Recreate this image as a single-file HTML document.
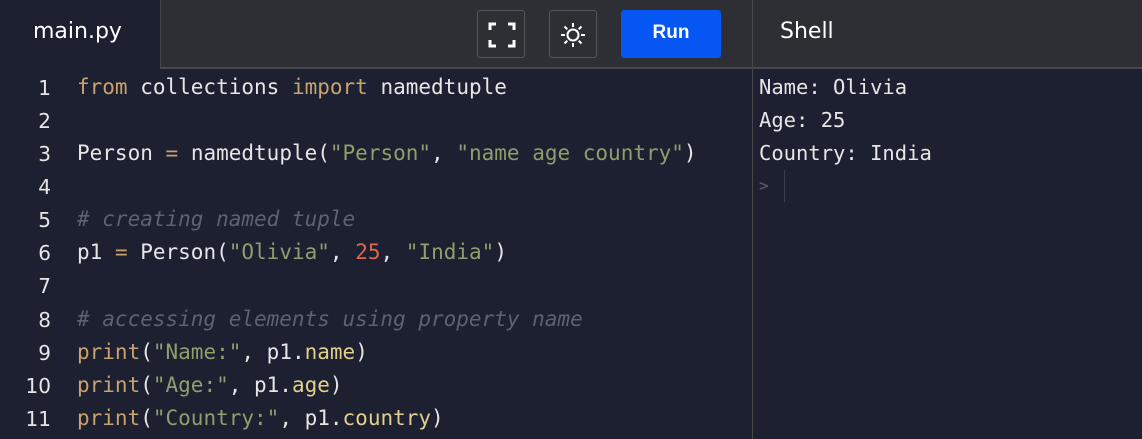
<!DOCTYPE html>
<html><head><style>
*{margin:0;padding:0;box-sizing:border-box}
body{width:1142px;height:439px;background:#1c2030;overflow:hidden;position:relative;font-family:"DejaVu Sans Mono","Liberation Mono",monospace;}
.hdr{position:absolute;left:160px;top:0;width:982px;height:69px;background:#2e2f35;border-left:1px solid #45464c;border-bottom:2px solid #45474d}
.tab{position:absolute;left:33px;top:19px;color:#fff;font:22px "DejaVu Sans",sans-serif}
.btn{position:absolute;top:10px;width:48px;height:48px;border:1px solid #55565c;border-radius:3px}
.run{position:absolute;left:621px;top:10px;width:100px;height:48px;background:#0556f3;border-radius:3px;color:#fff;font:bold 19px "Liberation Sans",sans-serif;text-align:center;line-height:46px}
.div{position:absolute;left:752px;top:0;width:1px;height:439px;background:#45474d}
.shell{position:absolute;left:780px;top:19px;color:#fff;font:22px "DejaVu Sans",sans-serif}
.ln{position:absolute;left:0;width:51px;text-align:right;color:#e6e6e6;font:20px "DejaVu Sans",sans-serif;margin-top:2px}
.code{position:absolute;left:77px;color:#e6e6e6;font-size:21px;white-space:pre;margin-top:2px}
.k{color:#c9a26d}.s{color:#8f9e6c}.a{color:#e2cf8b}.n{color:#e0654f}.c{color:#5d6170;font-style:italic}
.out{position:absolute;left:759px;color:#e6e6e6;font-size:20.5px;white-space:pre;margin-top:1px}
</style></head><body>
<div class="hdr"></div>
<div class="tab">main.py</div>
<div class="btn" style="left:477px"><svg width="48" height="48" viewBox="0 0 48 48" fill="none" stroke="#fff" stroke-width="3"><path d="M12 19v-6h6M30 13h6v6M36 29v6h-6M18 35h-6v-6"/></svg></div>
<div class="btn" style="left:549px"><svg width="48" height="48" viewBox="0 0 48 48" fill="none" stroke="#fff" stroke-width="2"><circle cx="23" cy="24" r="5.5"/><path d="M23 12v4M23 32v4M11 24h4M31 24h4M14.5 15.5l2.8 2.8M28.7 29.7l2.8 2.8M14.5 32.5l2.8-2.8M28.7 18.3l2.8-2.8"/></svg></div>
<div class="run">Run</div>
<div class="div"></div>
<div class="shell">Shell</div>
<div class="ln" style="top:74px">1</div><div class="code" style="top:73px"><span class="k">from</span> collections <span class="k">import</span> namedtuple</div>
<div class="ln" style="top:107px">2</div>
<div class="ln" style="top:140px">3</div><div class="code" style="top:139px">Person <span class="k">=</span> namedtuple(<span class="s">"Person"</span>, <span class="s">"name age country"</span>)</div>
<div class="ln" style="top:173px">4</div>
<div class="ln" style="top:206px">5</div><div class="code" style="top:205px"><span class="c"># creating named tuple</span></div>
<div class="ln" style="top:239px">6</div><div class="code" style="top:238px">p1 <span class="k">=</span> Person(<span class="s">"Olivia"</span>, <span class="n">25</span>, <span class="s">"India"</span>)</div>
<div class="ln" style="top:272px">7</div>
<div class="ln" style="top:306px">8</div><div class="code" style="top:305px"><span class="c"># accessing elements using property name</span></div>
<div class="ln" style="top:339px">9</div><div class="code" style="top:338px"><span class="k">print</span>(<span class="s">"Name:"</span>, p1.<span class="a">name</span>)</div>
<div class="ln" style="top:372px">10</div><div class="code" style="top:371px"><span class="k">print</span>(<span class="s">"Age:"</span>, p1.<span class="a">age</span>)</div>
<div class="ln" style="top:405px">11</div><div class="code" style="top:404px"><span class="k">print</span>(<span class="s">"Country:"</span>, p1.<span class="a">country</span>)</div>
<div class="out" style="top:74px">Name: Olivia</div>
<div class="out" style="top:107px">Age: 25</div>
<div class="out" style="top:140px">Country: India</div>
<div class="out" style="top:175px;color:#5d6170;font-size:16px">&gt;</div>
<div style="position:absolute;left:784px;top:170px;width:1px;height:32px;background:#3a3e4c"></div>
</body></html>
